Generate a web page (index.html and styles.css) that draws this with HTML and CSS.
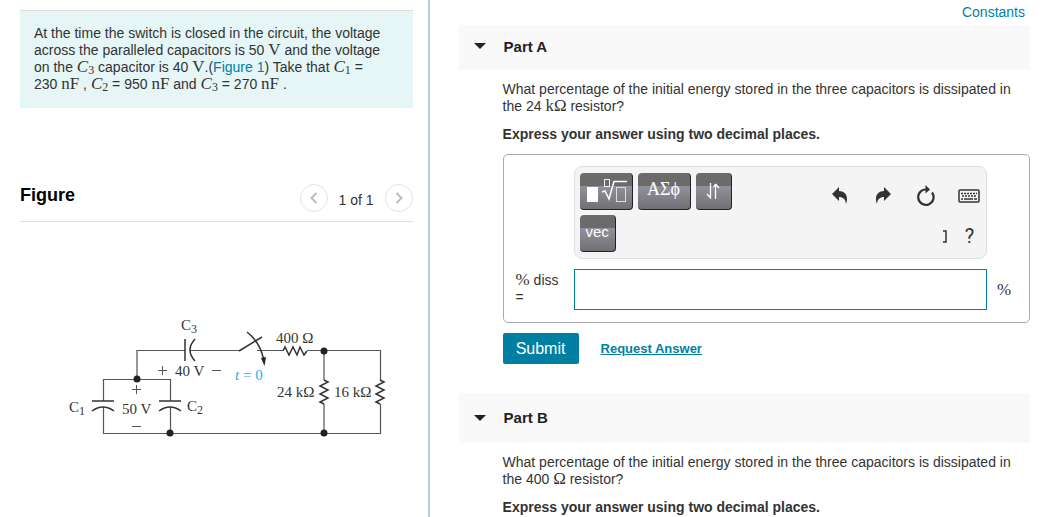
FILE: index.html
```html
<!DOCTYPE html>
<html lang="en">
<head>
    <meta charset="UTF-8">
    <meta name="viewport" content="width=device-width, initial-scale=1.0">
    <title>Capacitor circuit</title>
    <link rel="stylesheet" href="styles.css">
</head>
<body>
<div class="layout">
    <aside class="left-pane">
        <div class="problem">
            At the time the switch is closed in the circuit, the voltage across the paralleled capacitors is 50 <span class="math">V</span> and the voltage on the <span class="math"><i>C</i><sub>3</sub></span> capacitor is 40 <span class="math">V</span>.(<a href="#figure">Figure 1</a>) Take that <span class="math"><i>C</i><sub>1</sub></span> = 230 <span class="math">nF</span> , <span class="math"><i>C</i><sub>2</sub></span> = 950 <span class="math">nF</span> and <span class="math"><i>C</i><sub>3</sub></span> = 270 <span class="math">nF</span> .
        </div>

        <div class="figure-header">
            <h2>Figure</h2>
            <div class="pager">
                <button class="round" aria-label="Previous figure">
                    <svg width="8" height="12" viewBox="0 0 8 12"><path d="M6.5 1 L1.5 6 L6.5 11"/></svg>
                </button>
                <span class="count">1 of 1</span>
                <button class="round" aria-label="Next figure">
                    <svg width="8" height="12" viewBox="0 0 8 12"><path d="M1.5 1 L6.5 6 L1.5 11"/></svg>
                </button>
            </div>
        </div>

        <div class="figure" id="figure">
            <svg class="circuit" width="340" height="130" viewBox="0 0 340 130">
                <!-- wires -->
                <g class="wire">
                    <path d="M91 69 V40.5 H139 M144 40.5 H193 M211 40.5 H237 M261 40.5 H334.5 V70 M334.5 94 V123.5 H57.5 V97"/>
                    <path d="M57.5 91 V69.5 H124.5 V91 M124.5 97 V123 M278 41 V70 M278 94 V123"/>
                </g>
                <!-- capacitors, switch and resistors -->
                <g class="part-line">
                    <path d="M139 29 V51 M149 29 Q139 40 149 51"/>
                    <path d="M46 91 H68 M46 101 Q57 93 68 101"/>
                    <path d="M113 91 H135 M113 101 Q124 93 135 101"/>
                    <path d="M193 41 L216 27 M201 22 Q214 32 217.500 49"/>
                    <path d="M237 41 L239 37 L243 45 L247 37 L251 45 L254 37 L258 45 L261 41"/>
                    <path d="M278 70 L282 72 L274 76 L282 80 L274 84 L282 88 L274 92 L278 94"/>
                    <path d="M334 70 L338 72 L330 76 L338 80 L330 84 L338 88 L330 92 L334 94"/>
                </g>
                <path class="dot" d="M215 48 L220 47 L218.500 56 Z"/>
                <circle class="dot" cx="91" cy="69" r="3.500"/>
                <circle class="dot" cx="124" cy="123" r="3.500"/>
                <circle class="dot" cx="278" cy="41" r="3.500"/>
                <circle class="dot" cx="278" cy="123" r="3.500"/>
                <!-- labels -->
                <text x="135" y="20">C<tspan class="idx" dy="3">3</tspan></text>
                <text x="23" y="102">C<tspan class="idx" dy="3">1</tspan></text>
                <text x="141" y="101">C<tspan class="idx" dy="3">2</tspan></text>
                <text x="129" y="66">40 V</text>
                <text x="76" y="104">50 V</text>
                <text x="230" y="33">400 Ω</text>
                <text x="231" y="87">24 kΩ</text>
                <text x="288" y="87">16 kΩ</text>
                <text class="time" x="189" y="70"><tspan font-style="italic">t</tspan> = 0</text>
                <path class="sign" d="M112 60.5 H121 M116.500 56 V65 M166 60.5 H175 M86 79.500 H95 M90.500 75 V84 M86 116.500 H95"/>
            </svg>
        </div>
    </aside>

    <main class="right-pane">
        <div class="top-links"><a href="#constants">Constants</a></div>

        <section>
            <div class="part-header">
                <span class="arrow"></span>
                <h3>Part A</h3>
            </div>
            <div class="part-body">
                <p>What percentage of the initial energy stored in the three capacitors is dissipated in the 24 <span class="math">kΩ</span> resistor?</p>
                <p class="instructions">Express your answer using two decimal places.</p>

                <div class="answer-box">
                    <div class="toolbar">
                        <div class="templates">
                            <button class="tool wide" aria-label="Templates">
                                <svg width="42" height="26" viewBox="0 0 42 26">
                                    <rect x="2" y="10" width="11" height="15" fill="#fff"/>
                                    <path d="M17 15 L20 14 L24 22 L29 4.500 H42" fill="none" stroke="#fff" stroke-width="1.500"/>
                                    <rect x="19.500" y="2.500" width="5" height="7" fill="none" stroke="#eee"/>
                                    <rect x="31.500" y="10.500" width="9" height="14" fill="none" stroke="#ddd"/>
                                </svg>
                            </button>
                            <button class="tool wide greek">ΑΣϕ</button>
                            <button class="tool" aria-label="Arrows">
                                <svg width="14" height="18" viewBox="0 0 14 18"><path d="M4.500 2 V16 M1 13 L4.500 17 V13 M9.500 18 V3 M9.500 3 L13 7 M9.500 3 L7.500 6" fill="none" stroke="#fff" stroke-width="1.300"/></svg>
                            </button>
                            <button class="tool vec">vec</button>
                        </div>
                        <div class="actions">
                            <button aria-label="Undo">
                                <svg width="16" height="18" viewBox="0 0 16 18"><path d="M0 7 L7 0 V4 C13 4 17 9 14 17 C13.500 12 11 10 7 10 V14 Z"/></svg>
                            </button>
                            <button aria-label="Redo">
                                <svg width="16" height="18" viewBox="0 0 16 18"><path d="M16 7 L9 0 V4 C3 4 -1 9 2 17 C2.500 12 5 10 9 10 V14 Z"/></svg>
                            </button>
                            <button aria-label="Reset">
                                <svg width="20" height="22" viewBox="0 0 20 22"><path d="M16 7.500 A7.700 7.700 0 1 1 10 4.500" fill="none" stroke="#333" stroke-width="2.200"/><path d="M9.500 0 L14 4.500 L9.500 8.500 Z"/></svg>
                            </button>
                            <button aria-label="Keyboard">
                                <svg width="22" height="14" viewBox="0 0 22 14"><rect x="1" y="1" width="20" height="12" rx="1" fill="none" stroke="#333" stroke-width="1.500"/><path d="M3 4.500 H19 M4 7 H19" fill="none" stroke="#333" stroke-width="1.600" stroke-dasharray="2 1"/><path d="M3 10 H5 M6 10 H15 M16 10 H19" fill="none" stroke="#333" stroke-width="1.600"/></svg>
                            </button>
                            <div class="help-row">
                                <svg width="4" height="14" viewBox="0 0 4 14"><path d="M0 2 H3 V13 H0" fill="none" stroke="#333" stroke-width="1.500"/></svg>
                                <button class="help" aria-label="Help">?</button>
                            </div>
                        </div>
                    </div>
                    <label class="answer-label" for="answer"><span class="math">%</span> diss =</label>
                    <input class="answer-input" type="text" id="answer">
                    <span class="unit math">%</span>
                </div>

                <div class="buttons">
                    <button class="submit">Submit</button>
                    <a class="request" href="#request">Request Answer</a>
                </div>
            </div>
        </section>

        <section>
            <div class="part-header tall">
                <span class="arrow"></span>
                <h3>Part B</h3>
            </div>
            <div class="part-body">
                <p>What percentage of the initial energy stored in the three capacitors is dissipated in the 400 <span class="math">Ω</span> resistor?</p>
                <p class="instructions">Express your answer using two decimal places.</p>
            </div>
        </section>
    </main>
</div>
</body>
</html>
```
FILE: styles.css
```css
* {
    box-sizing: border-box;
}

body {
    margin: 0;
    font-family: "Liberation Sans", Arial, sans-serif;
    font-size: 14px;
    line-height: 17px;
    color: #333;
    background: #fff;
}

a {
    color: #007fa3;
    text-decoration: none;
}

button {
    padding: 0;
    border: none;
    background: none;
    font-family: inherit;
    cursor: pointer;
}

.layout {
    display: flex;
    min-height: 100vh;
}

.left-pane {
    flex: none;
    width: 40.6%;
    padding: 10px 15px 0 20px;
    border-right: 2px solid #b8cce0;
}

.right-pane {
    flex: 1;
    padding: 4px 28px 0 29px;
}

.math {
    font-family: "Liberation Serif", "Times New Roman", serif;
    font-size: 17px;
    line-height: 0;
}

.math sub {
    font-size: 12px;
    line-height: 0;
    vertical-align: -2px;
}

/* Problem statement */
.problem {
    padding: 14px 30px 15px 14px;
    border-top: 1px solid #ddd;
    background: #e6f6f7;
}

/* Figure */
.figure-header {
    display: flex;
    justify-content: space-between;
    align-items: center;
    margin-top: 76px;
    padding-bottom: 9px;
    border-bottom: 1px solid #ddd;
}

.figure-header h2 {
    margin: 0 0 6px;
    font-size: 18px;
    line-height: 22px;
    color: #000;
}

.pager {
    display: flex;
    align-items: center;
    gap: 11px;
}

.count {
    padding-top: 4px;
}

.round {
    display: flex;
    justify-content: center;
    align-items: center;
    width: 28px;
    height: 28px;
    border: 1px solid #e3e3e3;
    border-radius: 50%;
}

.round path {
    fill: none;
    stroke: #bbb;
    stroke-width: 2;
}

.figure {
    padding-top: 88px;
    text-align: center;
}

.circuit {
    max-width: 100%;
    font-family: "Liberation Serif", "Times New Roman", serif;
    font-size: 15px;
    fill: #333;
}

.circuit .idx {
    font-size: 12px;
}

.circuit .time {
    fill: #1ab2ec;
}

.wire {
    fill: none;
    stroke: #555;
    stroke-width: 1.2;
}

.part-line {
    fill: none;
    stroke: #333;
    stroke-width: 1.5;
}

.sign {
    fill: none;
    stroke: #555;
}

.dot {
    fill: #222;
}

/* Parts */
.top-links {
    padding: 0 5px 4px;
    text-align: right;
}

.part-header {
    display: flex;
    align-items: center;
    gap: 18px;
    height: 45px;
    padding: 0 15px 3px;
    background: #f9f9f9;
}

.part-header.tall {
    height: 50px;
    padding-bottom: 1px;
}

.part-header h3 {
    margin: 0;
    font-size: 15px;
    color: #222;
}

.arrow {
    border: 6px solid transparent;
    border-top-color: #222;
    border-bottom: none;
}

.part-body {
    padding: 11px 0 0 44px;
}

.part-body p {
    margin: 0 0 11px;
}

.part-body .instructions {
    font-weight: bold;
}

.answer-box {
    display: grid;
    grid-template-columns: 48px 1fr 23px;
    align-items: center;
    gap: 10px;
    padding: 11px 9px 12px 12px;
    border: 1px solid #aaa;
    border-radius: 5px;
}

.toolbar {
    grid-column: 2;
    display: flex;
    justify-content: space-between;
    padding: 6px 5px;
    border: 1px solid #ddd;
    border-radius: 8px;
    background: #f4f4f4;
}

.templates {
    display: flex;
    flex-wrap: wrap;
    gap: 5px;
    width: 160px;
}

.tool {
    display: flex;
    justify-content: center;
    align-items: center;
    width: 36px;
    height: 37px;
    padding-bottom: 3px;
    border-radius: 4px;
    border-right: 1px solid #222;
    border-bottom: 1px solid #222;
    background: linear-gradient(#6b6b6b 35%, #92929b 35%, #707074);
    color: #fff;
    font-size: 15px;
}

.tool.wide {
    width: 53px;
}

.tool.greek {
    font-family: "Liberation Serif", "Times New Roman", serif;
    font-size: 18px;
}

.actions {
    display: grid;
    grid-template-columns: repeat(4, 43px);
    grid-template-rows: 46px 33px;
    justify-items: center;
    align-items: center;
    margin-right: -9px;
}

.actions svg {
    display: block;
    fill: #333;
}

.help-row {
    grid-column: 4;
    display: flex;
    align-items: center;
    gap: 18px;
    margin-left: -20px;
}

.help {
    font-family: Roboto, sans-serif;
    font-size: 20px;
    color: #333;
}

.answer-label {
    grid-column: 1;
    align-self: start;
    padding-top: 3px;
}

.answer-input {
    width: 100%;
    height: 41px;
    padding: 0 8px;
    border: 1px solid #007fa3;
    font-size: 16px;
}

.buttons {
    display: flex;
    align-items: center;
    gap: 22px;
    padding: 10px 0 29px;
}

.submit {
    width: 76px;
    height: 31px;
    border-radius: 2px;
    background: #007fa3;
    color: #fff;
    font-size: 16px;
}

.request {
    font-size: 13px;
    font-weight: bold;
    text-decoration: underline;
}
```
